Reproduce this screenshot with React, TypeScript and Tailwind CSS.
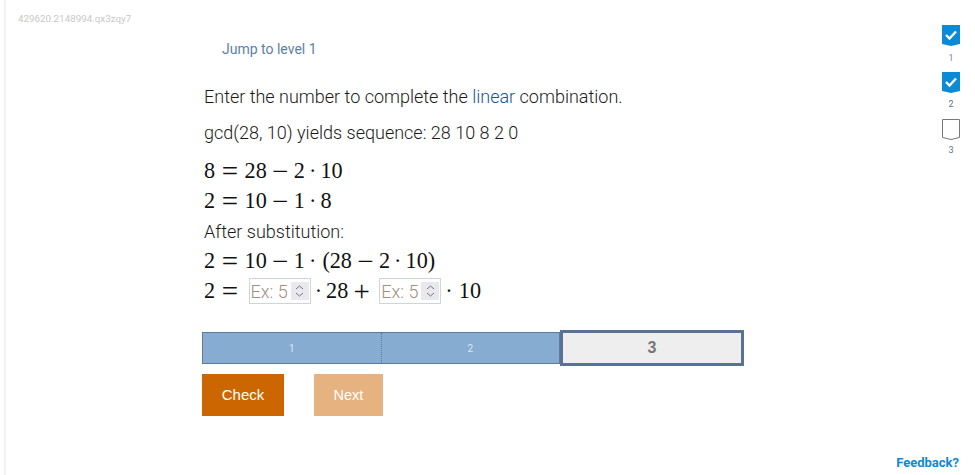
function Check() {
  return (
    <svg width="18" height="21" viewBox="0 0 18 21">
      <path d="M0 0H18V19L9 21L0 19Z" fill="#0b8ad6" />
      <path d="M4 10L7.5 13.5L14 6.5" fill="none" stroke="#fff" strokeWidth="2.4" />
    </svg>
  );
}

function EmptyBadge() {
  return (
    <svg width="18" height="21" viewBox="0 0 18 21">
      <path d="M0.5 0.5H17.5V18.5L9 20.500L0.5 18.5Z" fill="#fff" stroke="#777" strokeWidth="1" />
    </svg>
  );
}

function NumberBox({ className }: { className: string }) {
  return (
    <span className={`inline-flex h-[26px] w-[62px] items-center border border-[#ccd5d8] bg-white pl-[1px] font-['Roboto',sans-serif] text-[18px] font-light text-[#a08f7e] ${className}`}>
      <span className="flex-1">Ex: 5</span>
      <span className="mr-[1px] flex h-[18px] w-[18px] items-center justify-center bg-[#e8e8ee]">
        <svg width="9" height="14" viewBox="0 0 9 14">
          <path d="M1 5L4.500 2L8 5M1 9L4.500 12L8 9" fill="none" stroke="#777" strokeWidth="1" />
        </svg>
      </span>
    </span>
  );
}

// operators are set wider than the text digits, like the math font
function Rel() {
  return <span className="inline-block w-[29.5px] text-center text-[29px] leading-none">=</span>;
}

function Bin({ children }: { children: React.ReactNode }) {
  return <span className="inline-block w-[27px] text-center text-[29px] leading-none">{children}</span>;
}

function Dot() {
  return <span className="inline-block w-[15.5px] text-center leading-none">·</span>;
}

function MathLine({ children }: { children: React.ReactNode }) {
  return (
    <div className="flex h-[30px] items-center whitespace-pre font-['Liberation_Serif',serif] text-[22.2px] text-[#111]">
      {children}
    </div>
  );
}

export default function App() {
  return (
    <div className="flex h-[475px] w-[975px] overflow-hidden bg-white font-['Roboto',sans-serif]">
      <div className="ml-[4px] w-[2px] bg-[#f1f1f1]" />
      <div className="flex-1 pl-[12px] pt-[13px]">
        <div className="h-[11px] text-[9.8px] leading-[11px] text-[#c8c8c8]">429620.2148994.qx3zqy7</div>
        <div className="pl-[204px] pt-[17px] text-[14px] leading-[16px] text-[#5b7fa8]">Jump to level 1</div>

        <div className="ml-[184px] w-[542px] pt-[28px]">
          <p className="pl-[2px] text-[18px] font-light leading-[24px] text-[#1a1a1a]">
            Enter the number to complete the <span className="text-[#14559c]">linear</span> combination.
          </p>
          <p className="mt-[12px] pl-[2px] text-[18px] font-light leading-[24px] text-[#1a1a1a]">
            gcd(28, 10) yields sequence: 28 10 8 2 0
          </p>

          <div className="mt-[11px] pl-[2px]">
            <MathLine>8<Rel />28<Bin>−</Bin>2<Dot />10</MathLine>
            <MathLine>2<Rel />10<Bin>−</Bin>1<Dot />8</MathLine>
            <div className="flex h-[30px] items-center text-[18px] font-light text-[#1a1a1a]">After substitution:</div>
            <MathLine>2<Rel />10<Bin>−</Bin>1<Dot /><span className="ml-[2px]">(28</span><Bin>−</Bin>2<Dot />10)</MathLine>
            <MathLine>
              2<Rel /><NumberBox className="ml-[4px]" /><Dot />28<Bin>+</Bin><NumberBox className="ml-[4px]" /><Dot /><span className="ml-[2px]">10</span>
            </MathLine>
          </div>

          <div className="mt-[24px] flex h-[36px] items-center">
            <div className="flex h-[32px] w-[358px] border border-[#5a7a9e] bg-[#87acd2] text-[10px] text-[#dbe6f1]">
              <div className="flex flex-1 items-center justify-center border-r border-dotted border-[#5a7a9e]">1</div>
              <div className="flex flex-1 items-center justify-center">2</div>
            </div>
            <div className="flex h-[36px] w-[184px] items-center justify-center border-[3px] border-[#5a7194] bg-[#eeeeee] font-['Liberation_Sans',sans-serif] text-[16px] font-bold text-[#777]">
              3
            </div>
          </div>

          <div className="mt-[8px] flex gap-[30px] font-['Liberation_Sans',sans-serif]">
            <button className="h-[42px] w-[82px] bg-[#cc6600] text-[15px] text-white">Check</button>
            <button className="h-[42px] w-[69px] bg-[#e6b27f] pt-[1px] text-[14.5px] text-white">Next</button>
          </div>
        </div>
      </div>

      <div className="flex w-[85px] flex-col items-end justify-between pb-[5px] pr-[15px] pt-[25px]">
        <div className="flex w-[18px] flex-col items-center text-[9px] leading-[12px] text-[#5f6f86]">
          <Check />
          <span className="mb-[8px] mt-[6px] text-[#7a8aa8]">1</span>
          <Check />
          <span className="mb-[9px] mt-[5px]">2</span>
          <EmptyBadge />
          <span className="mt-[4px]">3</span>
        </div>
        <div className="mr-[1px] text-[13px] font-bold leading-[14px] text-[#0b8ad6]">Feedback?</div>
      </div>
    </div>
  );
}
